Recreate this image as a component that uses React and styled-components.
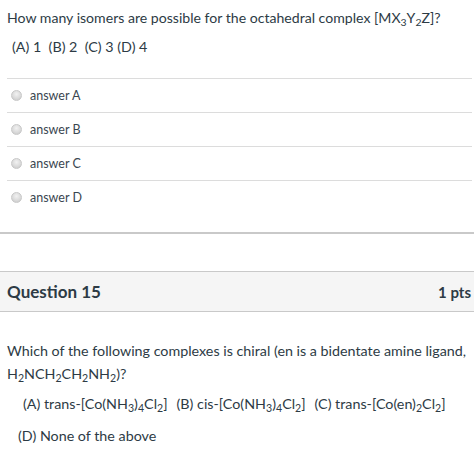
import React from 'react';
import styled, { createGlobalStyle } from 'styled-components';

const Global = createGlobalStyle`
  html, body {
    margin: 0;
    padding: 0;
    background: #ffffff;
  }
  body {
    font-family: Lato, "Open Sans", "Liberation Sans", sans-serif;
    color: #2d3b45;
    width: 474px;
    overflow: hidden;
  }
  sub {
    font-size: 0.74em;
    line-height: 0;
    vertical-align: baseline;
    position: relative;
    top: 0.3em;
  }
`;

const Page = styled.div`
  width: 474px;
  height: 469px;
  overflow: hidden;
`;

const Body = styled.div`
  padding: 0 0 0 7px;
`;

const Prompt = styled.p`
  margin: 0;
  padding-top: 6px;
  font-size: 14.1px;
  line-height: 23px;
`;

const Choices = styled.p`
  margin: 0;
  padding: 6px 0 0 5px;
  font-size: 14.3px;
  line-height: 23px;
`;

const AnswerList = styled.div`
  margin-top: 20px;
  border-top: 1px solid #dcdcdc;
  margin-right: 2px;
`;

const Answer = styled.label`
  display: flex;
  align-items: center;
  gap: 8px;
  height: 33px;
  padding-left: 4px;
  border-bottom: 1px solid #dcdcdc;
  font-size: 12.5px;
  color: #3a4650;

  &:last-child {
    border-bottom: none;
  }
`;

const Radio = styled.span`
  width: 11px;
  height: 11px;
  border-radius: 50%;
  background: radial-gradient(circle at 50% 35%, #f2f2f2 0%, #d9d9d9 60%, #c4c4c4 100%);
  border: 1px solid #c8c8c8;
  box-sizing: border-box;
  flex: none;
`;

const Divider = styled.div`
  margin-top: 18px;
  height: 2px;
  background: #c9c9c9;
`;

const Header = styled.div`
  margin-top: 37px;
  display: flex;
  align-items: center;
  justify-content: space-between;
  height: 39px;
  padding: 0 3px 0 7px;
  background: #f5f5f5;
  border-top: 1px solid #c9c9c9;
  border-bottom: 1px solid #c9c9c9;
`;

const Title = styled.h2`
  margin: 0;
  font-size: 17px;
  font-weight: 700;
  color: #2d3b45;
`;

const Points = styled.span`
  font-size: 15px;
  font-weight: 700;
  color: #2d3b45;
`;

const Options = styled.p`
  margin: 0;
  padding: ${p => p.top}px 0 0 ${p => p.indent}px;
  font-size: 14.3px;
  line-height: 23px;
`;

const Gap = styled.span`
  display: inline-block;
  width: 9px;
`;

const Question2 = styled(Prompt)`
  padding-top: 27px;
  font-size: 14.3px;
`;

const answers = ['answer A', 'answer B', 'answer C', 'answer D'];

export default function App() {
  return (
    <Page>
      <Global />
      <Body>
        <Prompt>
          How many isomers are possible for the octahedral complex [MX<sub>3</sub>Y<sub>2</sub>Z]?
        </Prompt>
        <Choices>(A) 1&nbsp; (B) 2&nbsp; (C) 3&nbsp;(D) 4</Choices>
        <AnswerList>
          {answers.map(a => (
            <Answer key={a}>
              <Radio />
              {a}
            </Answer>
          ))}
        </AnswerList>
      </Body>
      <Divider />
      <Header>
        <Title>Question 15</Title>
        <Points>1 pts</Points>
      </Header>
      <Body>
        <Question2>
          Which of the following complexes is chiral (en is a bidentate amine ligand,
          H<sub>2</sub>NCH<sub>2</sub>CH<sub>2</sub>NH<sub>2</sub>)?
        </Question2>
        <Options indent={16} top={7}>
          (A) trans-[Co(NH<sub>3</sub>)<sub>4</sub>Cl<sub>2</sub>]<Gap />(B) cis-[Co(NH<sub>3</sub>)<sub>4</sub>Cl<sub>2</sub>]<Gap />(C) trans-[Co(en)<sub>2</sub>Cl<sub>2</sub>]
        </Options>
        <Options indent={11} top={9}>(D) None of the above</Options>
      </Body>
    </Page>
  );
}
